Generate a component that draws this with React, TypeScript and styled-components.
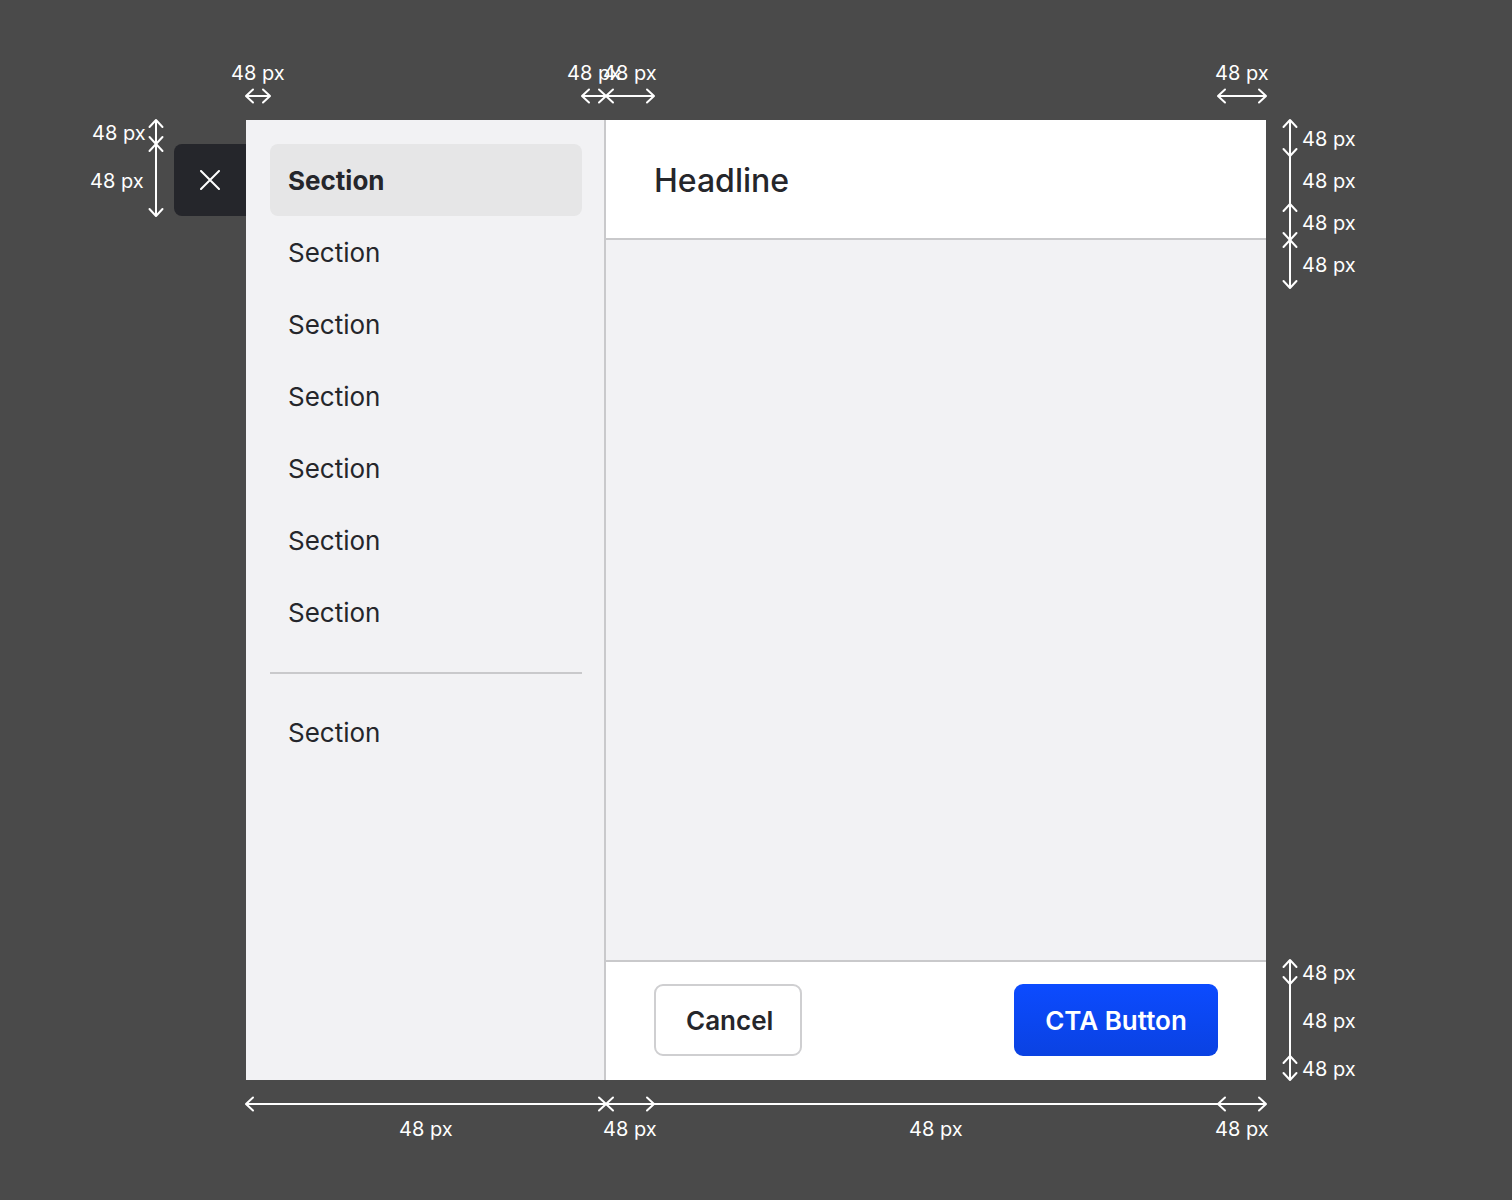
import React from "react";
import styled, { createGlobalStyle } from "styled-components";

const GlobalStyle = createGlobalStyle`
    body {
        margin: 0;
        background: #4a4a4a;
        font-family: Inter, "Noto Sans", sans-serif;
        color: #25262b;
    }
`

type Dir = "L" | "R" | "U" | "D";

const lines: [number, number, number, number][] = [
    [246, 96, 270, 96],
    [582, 96, 654, 96],
    [1218, 96, 1266, 96],
    [246, 1104, 1266, 1104],
    [156, 120, 156, 216],
    [1290, 120, 1290, 288],
    [1290, 960, 1290, 1080],
];

const heads: [number, number, Dir][] = [
    [246, 96, "L"], [270, 96, "R"],
    [582, 96, "L"], [606, 96, "R"], [606, 96, "L"], [654, 96, "R"],
    [1218, 96, "L"], [1266, 96, "R"],
    [246, 1104, "L"], [606, 1104, "R"], [606, 1104, "L"], [654, 1104, "R"],
    [1218, 1104, "L"], [1266, 1104, "R"],
    [156, 120, "U"], [156, 144, "D"], [156, 144, "U"], [156, 216, "D"],
    [1290, 120, "U"], [1290, 156, "D"], [1290, 204, "U"], [1290, 240, "D"],
    [1290, 240, "U"], [1290, 288, "D"],
    [1290, 960, "U"], [1290, 984, "D"], [1290, 1056, "U"], [1290, 1080, "D"],
];

const labels: [number, number][] = [
    [231, 73], [567, 73], [603, 73], [1215, 73],
    [92, 133], [90, 181],
    [1302, 139], [1302, 181], [1302, 223], [1302, 265],
    [1302, 973], [1302, 1021], [1302, 1069],
    [399, 1129], [603, 1129], [909, 1129], [1215, 1129],
];

const headPoints = (x: number, y: number, dir: Dir) => {
    const a = 7;
    const b = 6.5;
    if (dir === "L") return `${x + a},${y - b} ${x},${y} ${x + a},${y + b}`;
    if (dir === "R") return `${x - a},${y - b} ${x},${y} ${x - a},${y + b}`;
    if (dir === "U") return `${x - b},${y + a} ${x},${y} ${x + b},${y + a}`;
    return `${x - b},${y - a} ${x},${y} ${x + b},${y - a}`;
}

const sections = ["Section", "Section", "Section", "Section", "Section", "Section", "Section"];

export default function App() {
    return (
        <>
            <GlobalStyle />
            <Canvas>
                <CloseButton aria-label="Close">
                    <svg width="20" height="20" viewBox="0 0 20 20">
                        <path d="M1 1 19 19M19 1 1 19" stroke="#fff" strokeWidth="2" strokeLinecap="round" />
                    </svg>
                </CloseButton>
                <Modal>
                    <Sidebar>
                        {sections.map((s, i) => (
                            <NavItem key={i} $active={i === 0}>{s}</NavItem>
                        ))}
                        <Divider />
                        <NavItem>Section</NavItem>
                    </Sidebar>
                    <Main>
                        <Header>
                            <Headline>Headline</Headline>
                        </Header>
                        <Body />
                        <Footer>
                            <SecondaryButton>Cancel</SecondaryButton>
                            <PrimaryButton>CTA Button</PrimaryButton>
                        </Footer>
                    </Main>
                </Modal>

                <Overlay width="1512" height="1200" viewBox="0 0 1512 1200">
                    {lines.map(([x1, y1, x2, y2], i) => (
                        <line key={i} x1={x1} y1={y1} x2={x2} y2={y2} stroke="#fff" strokeWidth="2" />
                    ))}
                    {heads.map(([x, y, d], i) => (
                        <polyline key={i} points={headPoints(x, y, d)} fill="none" stroke="#fff" strokeWidth="2" strokeLinejoin="round" strokeLinecap="round" />
                    ))}
                </Overlay>
                {labels.map(([x, y], i) => (
                    <DimLabel key={i} $x={x} $y={y}>48 px</DimLabel>
                ))}
            </Canvas>
        </>
    )
}

const Canvas = styled.div`
    position: relative;
    width: 1512px;
    height: 1200px;
    box-sizing: border-box;
    padding: 120px 0 0 174px;
    display: flex;
    align-items: flex-start;
    overflow: hidden;
`

const CloseButton = styled.button`
    width: 72px;
    height: 72px;
    margin-top: 24px;
    padding: 0;
    border: none;
    border-radius: 8px 0 0 8px;
    background: #25262b;
    display: flex;
    align-items: center;
    justify-content: center;
`

const Modal = styled.div`
    width: 1020px;
    height: 960px;
    display: flex;
    background: #ffffff;
`

const Sidebar = styled.nav`
    width: 360px;
    box-sizing: border-box;
    padding: 24px 22px 24px 24px;
    background: #f2f2f4;
    border-right: 2px solid #c9c9cb;
    display: flex;
    flex-direction: column;
`

const NavItem = styled.div<{ $active?: boolean }>`
    height: 72px;
    padding: 0 18px;
    display: flex;
    align-items: center;
    border-radius: 8px;
    font-size: 26px;
    font-weight: ${p => p.$active ? 700 : 400};
    background: ${p => p.$active ? "#e6e6e7" : "transparent"};
    color: #25262b;
`

const Divider = styled.div`
    height: 2px;
    margin: 24px 0 22px;
    background: #c9c9cb;
`

const Main = styled.section`
    flex: 1;
    display: flex;
    flex-direction: column;
`

const Header = styled.header`
    height: 120px;
    box-sizing: border-box;
    padding: 2px 48px 0;
    border-bottom: 2px solid #c9c9cb;
    display: flex;
    align-items: center;
    background: #ffffff;
`

const Headline = styled.h1`
    margin: 0;
    font-size: 32px;
    font-weight: 500;
    color: #25262b;
`

const Body = styled.div`
    flex: 1;
    background: #f2f2f4;
`

const Footer = styled.footer`
    box-sizing: border-box;
    height: 120px;
    padding: 22px 48px 24px;
    border-top: 2px solid #c9c9cb;
    display: flex;
    align-items: center;
    justify-content: space-between;
    background: #ffffff;
`

const BaseButton = styled.button`
    height: 72px;
    padding: 0 30px;
    border-radius: 9px;
    font-family: Inter, "Noto Sans", sans-serif;
    font-size: 26px;
    font-weight: 600;
    box-sizing: border-box;
`

const SecondaryButton = styled(BaseButton)`
    width: 148px;
    background: #ffffff;
    border: 2px solid #cfcfd1;
    color: #25262b;
`

const PrimaryButton = styled(BaseButton)`
    width: 204px;
    border: none;
    background: linear-gradient(180deg, #0c4bff 0%, #0a42e2 100%);
    color: #ffffff;
`

const Overlay = styled.svg`
    position: absolute;
    left: 0;
    top: 0;
    pointer-events: none;
`

const DimLabel = styled.span<{ $x: number; $y: number }>`
    position: absolute;
    left: ${p => p.$x}px;
    top: ${p => p.$y - 12}px;
    line-height: 24px;
    font-size: 20px;
    color: #ffffff;
    white-space: nowrap;
`
